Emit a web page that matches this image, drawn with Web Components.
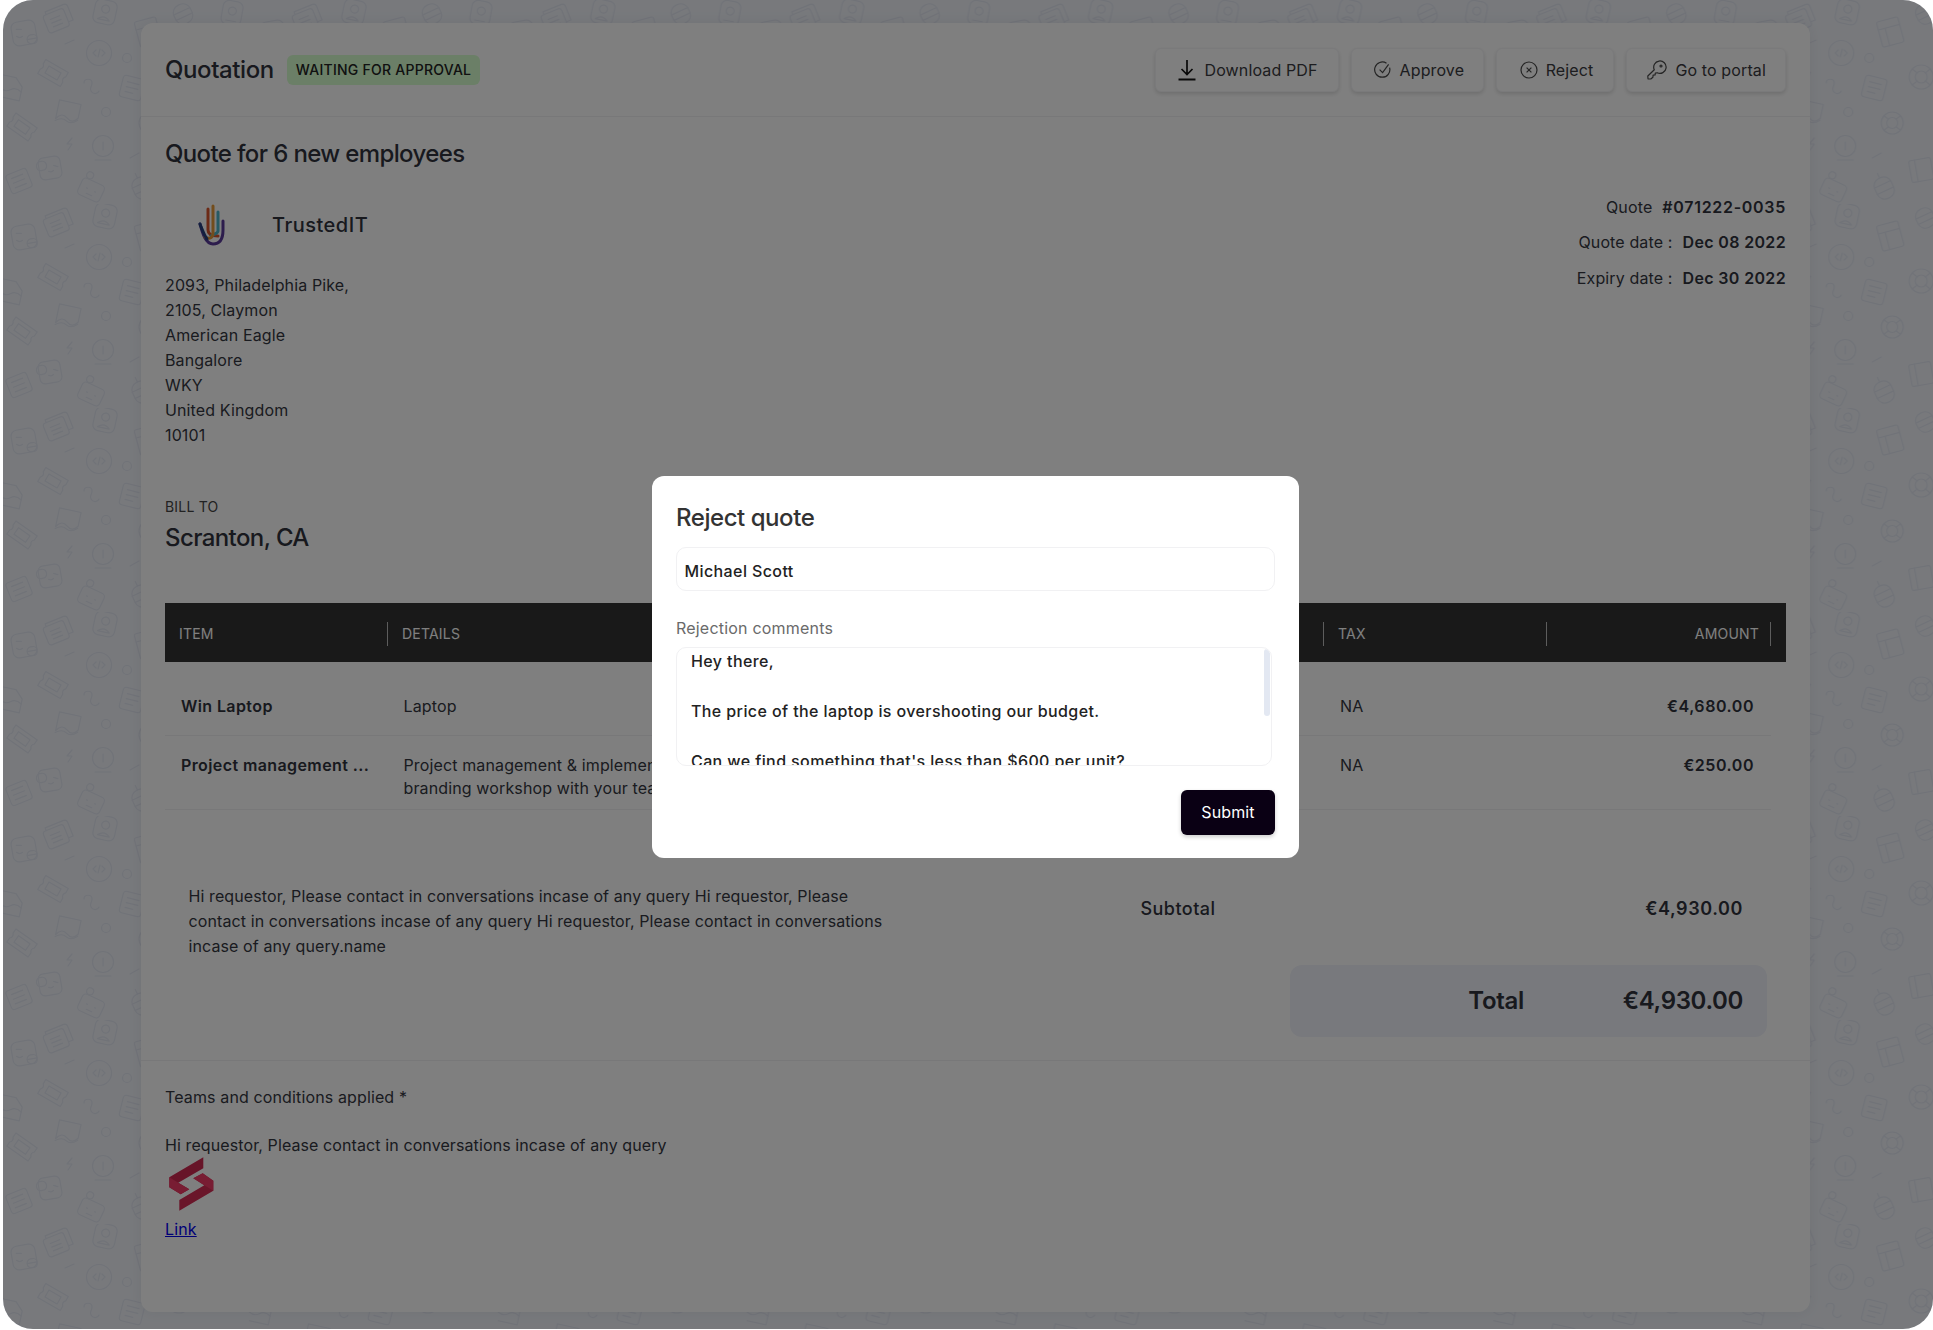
<!DOCTYPE html>
<html lang="en">
<head>
<meta charset="utf-8">
<title>Quotation</title>
<style>
  html, body { margin: 0; height: 100%; overflow: hidden; background: #fff; }
  body { font-family: Inter, "Liberation Sans", sans-serif; font-size: 16px; color: #343741; letter-spacing: .13px; }
  svg { display: block; }
</style>
</head>
<body>

<app-window>
  <quote-card>
    <quote-header slot="header">
      <span slot="title">Quotation</span>
      <status-badge slot="title">WAITING FOR APPROVAL</status-badge>
      <action-button style="--pl:22px;--pr:20px">
        <svg slot="icon" width="18" height="22" viewBox="0 0 18 22" fill="none" stroke="#111" stroke-width="1.7"><path d="M9 1v14M3.500 10l5.500 5.500 5.500-5.500"/><path d="M0.500 20.500h17" stroke-width="2"/></svg>
        Download PDF
      </action-button>
      <action-button>
        <svg slot="icon" width="18" height="18" viewBox="0 0 18 18" fill="none" stroke="#4a4a4a" stroke-width="1.200"><path d="M15.600 6.600A7.600 7.600 0 1 1 12.500 2.300"/><path d="M5.600 8.600l3 3 6-8.200"/></svg>
        Approve
      </action-button>
      <action-button style="--pl:22.500px;--pr:20px">
        <svg slot="icon" width="18" height="18" viewBox="0 0 18 18" fill="none" stroke="#4a4a4a" stroke-width="1.200"><circle cx="9" cy="9" r="8"/><path d="M6.600 6.600l4.800 4.800M11.400 6.600l-4.800 4.800"/></svg>
        Reject
      </action-button>
      <action-button style="--pl:20px">
        <svg slot="icon" width="20" height="20" viewBox="0 0 20 20" fill="none" stroke="#4a4a4a" stroke-width="1.200" stroke-linejoin="round"><path d="M7.300 9.800a6.200 6.200 0 1 1 3 3l-2 .2-.2 2-2 .2-.2 2-2.100 1.800-2.800-.2-.2-2.800z"/><circle cx="14" cy="6" r="1"/></svg>
        Go to portal
      </action-button>
    </quote-header>

    <quote-title>Quote for 6 new employees</quote-title>

    <quote-summary>
      <company-block slot="company">
        <svg slot="logo" width="35" height="50" viewBox="0 0 35 50" fill="none" stroke-width="3" stroke-linecap="round">
          <path d="M5 24c2 7 5 20 13 20 8 0 10-6 10-14v-9" stroke="#5a3a9a"/>
          <path d="M13 9v21c0 5 5 6 10 6" stroke="#d8542c"/>
          <path d="M23 12v19c0 3-5 3-7 5" stroke="#4fb4c6"/>
          <path d="M18 6v26c0 7-4 7-8 5" stroke="#e79a38"/>
          <path d="M5 24c2 5 4 11 7 15" stroke="#27407f"/>
        </svg>
        <span slot="name">TrustedIT</span>
        2093, Philadelphia Pike,<br>2105, Claymon<br>American Eagle<br>Bangalore<br>WKY<br>United Kingdom<br>10101
      </company-block>
      <meta-row label="Quote" value="#071222-0035" style="--value-ls:.7px"></meta-row>
      <meta-row label="Quote date :" value="Dec 08 2022"></meta-row>
      <meta-row label="Expiry date :" value="Dec 30 2022"></meta-row>
    </quote-summary>

    <bill-to label="BILL TO">Scranton, CA</bill-to>

    <items-table>
      <items-head></items-head>
      <item-row style="--row-h:59px;--row-top:14px">
        <span slot="item">Win Laptop</span>
        <span slot="details">Laptop</span>
        <span slot="tax">NA</span>
        <span slot="amount">€4,680.00</span>
      </item-row>
      <item-row style="--row-h:73px;--cell-top:18px">
        <span slot="item">Project management ...</span>
        <span slot="details">Project management &amp; implementation<br>branding workshop with your team</span>
        <span slot="tax">NA</span>
        <span slot="amount">€250.00</span>
      </item-row>
    </items-table>

    <totals-block subtotal="€4,930.00" total="€4,930.00">
      Hi requestor, Please contact in conversations incase of any query Hi requestor, Please contact in conversations incase of any query Hi requestor, Please contact in conversations incase of any query.name
    </totals-block>

    <terms-block>
      <span slot="terms">Teams and conditions applied *</span>
      <span slot="note">Hi requestor, Please contact in conversations incase of any query</span>
      <svg slot="logo" width="50" height="54" viewBox="0 0 50 54">
        <path d="M38.300 0.300V11.300L13.300 25.700 24.300 32.300 15.700 37.300 4.300 30.300V20.300z" fill="#cf2950"/>
        <path d="M4.300 20.300 13.300 25.700 24.300 32.300 15.700 37.300 4.300 30.300z" fill="#f03a66"/>
        <path d="M14.300 53.700V43L39.300 28.300 28.300 21.300 37.700 16.300 48.300 23.700V33.700z" fill="#d42c54"/>
        <path d="M28.300 21.300 37.700 16.300 48.300 23.700V33.700L39.300 28.300z" fill="#f03a66"/>
      </svg>
      <a slot="link" href="#">Link</a>
    </terms-block>
  </quote-card>

  <reject-modal slot="overlay" heading="Reject quote" name="Michael Scott" label="Rejection comments">Hey there,

The price of the laptop is overshooting our budget.

Can we find something that's less than $600 per unit?</reject-modal>
</app-window>

<script>
function define(name, markup, init) {
  const tpl = document.createElement('template');
  tpl.innerHTML = markup;
  customElements.define(name, class extends HTMLElement {
    constructor() {
      super();
      this.attachShadow({mode: 'open'}).appendChild(tpl.content.cloneNode(true));
    }
    connectedCallback() {
      if (init) init(this, this.shadowRoot);
    }
  });
}

// one tile of the doodle wallpaper, period read off the reference
const doodles = `
  <g transform="translate(24 33) rotate(-10)"><rect x="-12" y="-12" width="24" height="24" rx="6"/><path d="M-7-5l5 1M-8 2q3 3 6 1"/><rect x="2" y="3" width="10" height="9" rx="4"/><path d="M2 7h10"/></g>
  <g transform="translate(57 20) rotate(-22)"><rect x="-12" y="-9" width="22" height="19" rx="3"/><path d="M-8-9v-3h20q3 0 3 3v15h-5M-6-3h10M-6 1h10M-6 5h10"/></g>
  <g transform="translate(105 12) rotate(12)"><rect x="-11" y="-12" width="22" height="24" rx="6"/><circle cy="-3" r="4"/><path d="M-6 8q6-6 12 0z"/></g>
  <path d="M65 44l9-4"/>
  <g transform="translate(99 53)"><circle r="12.500"/><path d="M-3-3l-3 3 3 3M3-3l3 3-3 3M1-4l-2 8"/></g>
  <circle cx="127" cy="58" r="4.500"/>
  <g transform="translate(53 73) rotate(30)"><path d="M-13-8h26v5q-3 3 0 6v5h-26v-5q3-3 0-6z"/><rect x="-7" y="-4" width="14" height="8"/></g>
  <path d="M84 83c0-5 8-5 8 0 0 4-3 5-1 8 2 4 7 3 8 0"/>
  <g transform="translate(12 87) rotate(12)"><path d="M-12-10h14l8 8v14h-22z"/><path d="M-12 3q6 4 11 0t11 0"/></g>
  <g transform="translate(132 88) rotate(14)"><rect x="-11" y="-11" width="22" height="22" rx="3"/><path d="M-6-5h12M-6 0h12M-6 5h8"/></g>
  <g transform="translate(68 113) rotate(12)"><path d="M-11-11h22v14q-5 7-11 2t-11 3z"/><path d="M-11 10q6-5 11-2t11-3"/></g>
  <circle cx="106" cy="112" r="4.500"/>
  <g transform="translate(22 127) rotate(35)"><path d="M-13-8h26v5q-3 3 0 6v5h-26v-5q3-3 0-6z"/><rect x="-7" y="-4" width="14" height="8"/></g>
  <path d="M72 138l-5 6h5l-4 6"/>
  <g transform="translate(103 146)"><circle r="10.500"/><path d="M0-4v8M-8 14h16"/></g>
  <path d="M130 158l9-5"/>
  <g transform="translate(50 168) rotate(-10)"><rect x="-11" y="-11" width="22" height="22" rx="5"/><rect x="-13" y="-8" width="10" height="9" rx="4"/><path d="M-2 3q3 2 5 0M4-2l4 2"/></g>
  <g transform="translate(19 181) rotate(-22)"><rect x="-11" y="-10" width="22" height="20" rx="3"/><path d="M-6-5h12M-6 0h12M-6 5h12"/></g>
  <g transform="translate(91 190) rotate(25)"><rect x="-12" y="-9" width="24" height="18" rx="4"/><circle cx="-7" cy="-13" r="3.500"/><path d="M-5 0h1M4 0h1M-3 5h6"/></g>
  <g transform="translate(142 188) rotate(-25)"><rect x="-9" y="-11" width="18" height="22" rx="8"/><path d="M-9-4h18M-9 3h18M0-11v-5"/></g>
  <g transform="translate(183 14) rotate(-25)"><rect x="-9" y="-10" width="18" height="20" rx="8"/><path d="M-9-3h18M-9 3h18"/></g>
  <g transform="translate(232 13) rotate(10)"><rect x="-10" y="-12" width="20" height="24" rx="6"/><circle cy="-2" r="4"/><path d="M-5 8h10"/></g>
  <g transform="translate(148 32) rotate(-15)"><rect x="-11" y="-13" width="22" height="26" rx="2"/><path d="M-11-5h22M-4-5v18"/></g>
  <g transform="translate(179 77)"><circle r="12"/><circle r="6"/><path d="M-9-8l5 4M9-8l-5 4M-9 8l5-4M9 8l-5-4"/></g>
  <g transform="translate(150 123)"><circle r="11"/><circle r="5.500"/><path d="M-8-7l4 3M8-7l-4 3M-8 7l4-3M8 7l-4-3"/></g>
  <g transform="translate(179 170) rotate(-10)"><rect x="-11" y="-11" width="22" height="22" rx="2"/><path d="M-5-11v22"/></g>`;

define('doodle-bg', `
  <style>
    :host { position: absolute; inset: 0; display: block; }
    svg { width: 100%; height: 100%; display: block; }
  </style>
  <svg xmlns="http://www.w3.org/2000/svg">
    <defs>
      <pattern id="tile" width="248.900" height="204" patternUnits="userSpaceOnUse" patternTransform="translate(-3 0)">
        <g fill="none" stroke="#e2e6f1" stroke-width="1.200" stroke-linecap="round" stroke-linejoin="round">${doodles}</g>
      </pattern>
    </defs>
    <rect width="100%" height="100%" fill="url(#tile)"/>
  </svg>`);

define('app-window', `
  <style>
    :host {
      display: block; position: relative; box-sizing: border-box;
      width: 1930px; height: 1329px; margin: 0 0 0 3px;
      padding: 23px 123px 17px 138px;
      background: #f0f3f9; border-radius: 30px; overflow: hidden;
    }
    .overlay {
      position: absolute; inset: 0; z-index: 5;
      background: rgba(0, 0, 0, .5);
      display: flex; align-items: center; justify-content: center;
      padding: 4px 0 0 15px;
    }
    main { position: relative; height: 100%; }
  </style>
  <doodle-bg></doodle-bg>
  <main><slot></slot></main>
  <div class="overlay"><slot name="overlay"></slot></div>`);

define('quote-card', `
  <style>
    :host {
      display: block; box-sizing: border-box; height: 100%;
      background: #fff; border-radius: 12px;
      box-shadow: 0 0 14px rgba(40, 44, 60, .07);
    }
  </style>
  <slot name="header"></slot>
  <slot></slot>`);

define('quote-header', `
  <style>
    :host {
      display: flex; align-items: center; justify-content: space-between;
      box-sizing: border-box; height: 94px; padding: 0 24px;
      border-bottom: 1px solid #f1f1f3;
    }
    .left { display: flex; align-items: center; gap: 13px; font-size: 24px; font-weight: 500; color: #30333c; letter-spacing: -.4px; }
    .right { display: flex; gap: 12px; }
  </style>
  <div class="left"><slot name="title"></slot></div>
  <div class="right"><slot></slot></div>`);

define('status-badge', `
  <style>
    :host {
      display: inline-flex; align-items: center; height: 30px; padding: 0 9px;
      background: #d6ffce; border-radius: 6px;
      font-size: 14px; font-weight: 500; color: #222; letter-spacing: .25px; line-height: 1;
    }
  </style>
  <slot></slot>`);

define('action-button', `
  <style>
    :host {
      display: inline-flex; align-items: center; gap: 8px; box-sizing: border-box;
      height: 44px; padding: 0 var(--pr, 19px) 0 var(--pl, 22px);
      background: #fff; border: 1px solid #f4f4f6; border-radius: 6px;
      box-shadow: 0 2px 4px rgba(0, 0, 0, .14);
      font-size: 16px; color: #3a3a40; white-space: nowrap;
    }
  </style>
  <slot name="icon"></slot><slot></slot>`);

define('quote-title', `
  <style>
    :host { display: block; margin: 22px 24px 0; font-size: 24px; line-height: 30px; font-weight: 500; color: #30333c; letter-spacing: -.63px; }
  </style>
  <slot></slot>`);

define('quote-summary', `
  <style>
    :host { display: flex; justify-content: space-between; margin: 20.500px 24px 0; }
    .meta { display: flex; flex-direction: column; align-items: flex-end; }
  </style>
  <slot name="company"></slot>
  <div class="meta"><slot></slot></div>`);

define('company-block', `
  <style>
    :host { display: block; padding-top: 7.500px; line-height: 25px; }
    .brand { display: flex; align-items: center; height: 56px; margin-bottom: 19.500px; }
    .logo { width: 107px; padding-left: 30px; box-sizing: border-box; }
    .name { font-size: 20px; font-weight: 500; color: #30333c; letter-spacing: .5px; }
  </style>
  <div class="brand">
    <div class="logo"><slot name="logo"></slot></div>
    <div class="name"><slot name="name"></slot></div>
  </div>
  <slot></slot>`);

define('meta-row', `
  <style>
    :host { display: flex; gap: 10px; line-height: 35.500px; white-space: nowrap; }
    b { font-weight: 600; color: #30333c; letter-spacing: var(--value-ls, .35px); }
  </style>
  <span class="label"></span><b></b>`, (el, root) => {
    root.querySelector('.label').textContent = el.getAttribute('label');
    root.querySelector('b').textContent = el.getAttribute('value');
  });

define('bill-to', `
  <style>
    :host { display: block; margin: 49.500px 24px 0; font-size: 24px; line-height: 30px; font-weight: 500; color: #30333c; letter-spacing: -.6px; }
    .label { font-size: 14px; line-height: 20px; font-weight: 400; color: #444; margin-bottom: 6px; letter-spacing: .2px; }
  </style>
  <div class="label"></div>
  <slot></slot>`, (el, root) => {
    root.querySelector('.label').textContent = el.getAttribute('label');
  });

define('items-table', `
  <style>
    :host { display: block; margin: 50px 39px 0 24px; }
  </style>
  <slot></slot>`);

define('items-head', `
  <style>
    :host {
      display: grid; grid-template-columns: 223px 936px 223px 224px;
      height: 59px; margin-right: -15px; padding-right: 14px; padding-top: 2px; box-sizing: border-box;
      background: #333; color: #fff; font-size: 14px; align-items: center; letter-spacing: .2px;
    }
    div { height: 24px; line-height: 24px; border-right: 1px solid #bbb; padding-left: 14px; }
    .end { text-align: right; padding-right: 11px; }
  </style>
  <div>ITEM</div><div>DETAILS</div><div>TAX</div><div class="end">AMOUNT</div>`);

define('item-row', `
  <style>
    :host {
      display: grid; grid-template-columns: 223px 936px 223px 223px;
      min-height: var(--row-h); margin-top: var(--row-top, 0);
      border-bottom: 1px solid #f0f0f2; line-height: 23px;
    }
    div { padding: var(--cell-top, 18.500px) 0 0 16px; }
    .item { font-weight: 600; color: #30333c; white-space: nowrap; letter-spacing: .4px; }
    /* the rest of this cell sits behind the modal */
    .details { box-sizing: border-box; width: 291px; padding-left: 15.500px; overflow: hidden; white-space: nowrap; }
    .amount { font-weight: 600; text-align: right; padding: var(--cell-top, 18.500px) 16px 0 0; color: #30333c; letter-spacing: .55px; }
  </style>
  <div class="item"><slot name="item"></slot></div>
  <div class="details"><slot name="details"></slot></div>
  <div><slot name="tax"></slot></div>
  <div class="amount"><slot name="amount"></slot></div>`);

define('totals-block', `
  <style>
    :host { display: flex; justify-content: space-between; margin: 74px 43.500px 0 47.500px; height: 176px; }
    .note { width: 705px; line-height: 25px; letter-spacing: .1px; }
    .side { width: 626px; padding-top: 10.500px; }
    .sub { display: flex; justify-content: space-between; padding-right: 23.500px; font-size: 18px; line-height: 28px; font-weight: 500; color: #30333c; letter-spacing: .45px; }
    .sub b { font-weight: 600; letter-spacing: .6px; }
    .total {
      display: flex; justify-content: flex-end; align-items: center; gap: 99px;
      box-sizing: border-box; width: 476.500px; height: 72px; margin: 42px 0 0 auto; padding-right: 23.500px;
      background: #f0f3fa; border-radius: 12px;
      font-size: 24px; font-weight: 600; color: #30333c; letter-spacing: -.35px;
    }
  </style>
  <div class="note"><slot></slot></div>
  <div class="side">
    <div class="sub"><span>Subtotal</span><b class="s"></b></div>
    <div class="total"><span>Total</span><span class="t"></span></div>
  </div>`, (el, root) => {
    root.querySelector('.s').textContent = el.getAttribute('subtotal');
    root.querySelector('.t').textContent = el.getAttribute('total');
  });

define('terms-block', `
  <style>
    :host { display: block; border-top: 1px solid #f1f1f3; padding: 23.500px 24px 0; line-height: 25px; }
    .note { margin-top: 23px; letter-spacing: .1px; }
    .logo { margin: -1px 0 6.500px; height: 54px; }
    ::slotted(a) { color: #0000ee; }
  </style>
  <div><slot name="terms"></slot></div>
  <div class="note"><slot name="note"></slot></div>
  <div class="logo"><slot name="logo"></slot></div>
  <div><slot name="link"></slot></div>`);

define('reject-modal', `
  <style>
    :host {
      display: block; box-sizing: border-box; width: 647px; height: 382px;
      padding: 27px 24px 0; background: #fff; border-radius: 12px;
    }
    h2 { margin: 0 0 14px; font-size: 24px; line-height: 30px; font-weight: 500; color: #333; letter-spacing: -.45px; }
    .input {
      box-sizing: border-box; height: 44px; padding: 0 7.500px; line-height: 46px;
      border: 1px solid #f1f1f3; border-radius: 10px; font-weight: 500; color: #222; letter-spacing: .4px;
    }
    label { display: block; margin: 27px 0 9px; font-size: 16px; line-height: 20px; color: #6a6a6a; letter-spacing: .2px; }
    .area {
      position: relative; box-sizing: border-box; width: 596px; height: 119px; overflow: hidden;
      padding: 1.500px 14px 0; border: 1px solid #f1f1f3; border-radius: 10px;
      white-space: pre-wrap; line-height: 25px; font-weight: 500; color: #222; letter-spacing: .4px;
    }
    .thumb { position: absolute; top: 1px; right: 1px; width: 6px; height: 67px; border-radius: 3px; background: #e3e8f2; }
    button {
      display: block; width: 94px; height: 45px; margin: 24px 0 0 auto; padding: 0;
      font: inherit; letter-spacing: inherit; color: #fff; background: #0a0014; border: 0; border-radius: 6px;
      box-shadow: 0 2px 4px rgba(0, 0, 0, .2);
    }
  </style>
  <h2></h2>
  <div class="input"></div>
  <label></label>
  <div class="area"><slot></slot><div class="thumb"></div></div>
  <button type="button">Submit</button>`, (el, root) => {
    root.querySelector('h2').textContent = el.getAttribute('heading');
    root.querySelector('.input').textContent = el.getAttribute('name');
    root.querySelector('label').textContent = el.getAttribute('label');
  });
</script>
</body>
</html>
